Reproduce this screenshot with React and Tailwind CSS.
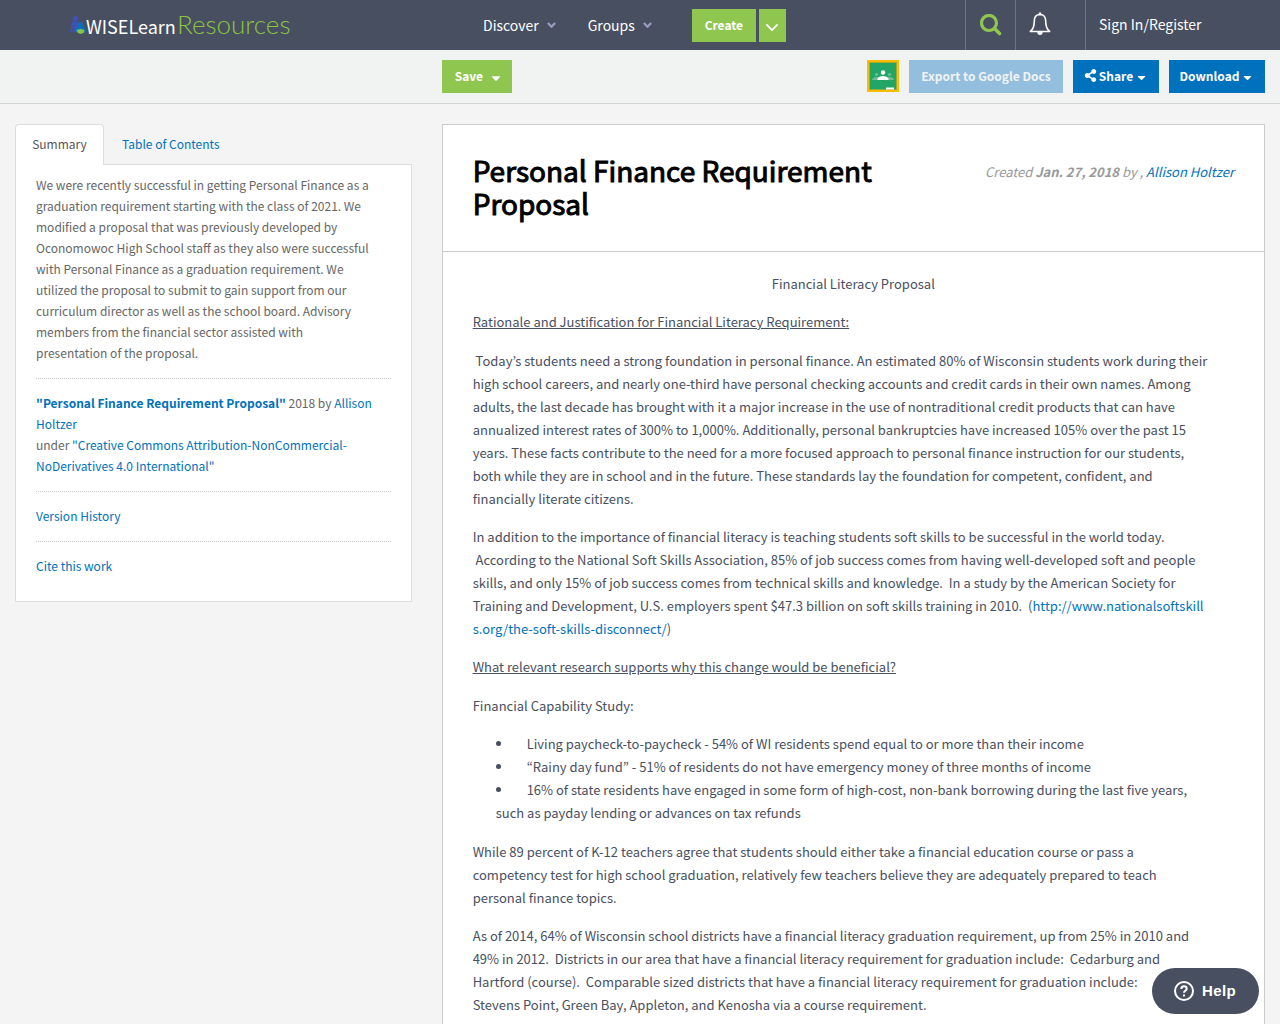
import { FaSearch, FaShareAlt, FaCaretDown } from "react-icons/fa";

const link = "text-[#0071bc] hover:underline";

function Chevron({ className, strokeWidth }) {
  return (
    <svg viewBox="0 0 16 10" className={className} fill="none" stroke="currentColor" strokeWidth={strokeWidth} aria-hidden="true">
      <path d="M1.5 1.5 8 8l6.500-6.500" />
    </svg>
  );
}

function Logo() {
  return (
    <a href="#home" className="ml-[69px] flex w-[224px] items-baseline self-center leading-[30px]">
      <svg viewBox="0 0 17 18" className="h-[18px] w-[17px] shrink-0" aria-hidden="true">
        <circle cx="6.500" cy="2.800" r="2.800" fill="#3f51b5" />
        <path d="M4.500 5c3.500-1 5.500 1 5.500 4l-2 7H.5C1.500 15 2 13.500 2 11c0-3 1-5.500 2.500-6z" fill="#3f51b5" />
        <path d="M4.500 9.500c0 2.500-.3 4.500-1.500 7" fill="none" stroke="#484f60" strokeWidth="0.800" />
        <circle cx="11.500" cy="8.500" r="2.500" fill="#0a72bd" />
        <path d="M7.500 11.500c2.500-1.200 5.500-1.200 8 0l1.500 5H6z" fill="#0a72bd" />
        <path d="M7.500 14l4-1 4 1-1 3-3 1-2.500-1z" fill="#8bc53f" />
      </svg>
      <span className="w-[91px] shrink-0 font-['Noto_Sans_CJK_KR',sans-serif] text-lg leading-[30px]">WISELearn</span>
      <span className="font-['Lato',sans-serif] text-[26px] leading-[30px] font-light text-[#8bc53f]">Resources</span>
    </a>
  );
}

function Bell() {
  return (
    <svg viewBox="0 0 22 24" className="h-6 w-[22px]" fill="none" stroke="#fff" strokeWidth="1.600" strokeLinejoin="round" aria-hidden="true">
      <path d="M11 2.500C7 2.500 5.300 5.500 5.300 9c0 5-.8 8-4 10.500h19.400C17.500 17 16.700 14 16.700 9c0-3.500-1.700-6.500-5.700-6.500z" />
      <path d="M11 .5v2" strokeWidth="2.400" />
      <path d="M8.300 20a2.700 3 0 0 0 5.400 0z" fill="#fff" stroke="none" />
    </svg>
  );
}

function Classroom() {
  return (
    <svg viewBox="0 0 32 32" className="size-8" aria-hidden="true">
      <path fill="#fbbc05" d="M0 0h32v32H0z" />
      <path fill="#23a566" d="M2.500 2.500h27v27h-27z" />
      <path d="M2.500 29.500v-27h27v27" fill="none" stroke="#b5a51c" strokeWidth=".8" />
      <g fill="#6dc096">
        <circle cx="9.500" cy="14.500" r="1.600" />
        <circle cx="22.500" cy="14.500" r="1.600" />
        <path d="M5 20c0-2 2.500-3 4.500-3s4.500 1 4.500 3zM18 20c0-2 2.500-3 4.500-3s4.500 1 4.500 3z" />
      </g>
      <circle cx="16" cy="12.500" r="2.200" fill="#fff" />
      <path fill="#fff" d="M10.500 20v-1c0-2 3.500-3 5.500-3s5.500 1 5.500 3v1zM19 27.500h8v2h-8z" />
    </svg>
  );
}

function NavMenu({ label }) {
  return (
    <button type="button" className="flex items-center gap-2 text-sm">
      {label}
      <Chevron className="h-[6px] w-[9px] text-[#9a9cc0]" strokeWidth="4" />
    </button>
  );
}

function Header() {
  return (
    <header className="flex h-[50px] items-stretch bg-[#484f60] text-white">
      <Logo />
      <nav className="ml-[190px] flex items-center gap-8">
        <NavMenu label="Discover" />
        <NavMenu label="Groups" />
        <div className="ml-2 flex gap-[3px]">
          <button type="button" className="h-[33px] w-16 bg-[#8fc650] text-xs font-bold">Create</button>
          <button type="button" aria-label="More create options" className="flex h-[33px] w-[27px] items-center justify-center bg-[#8fc650]">
            <Chevron className="mt-1 h-[9px] w-[14px]" strokeWidth="2" />
          </button>
        </div>
      </nav>
      <div className="ml-auto flex w-[315px] items-stretch">
        <button type="button" aria-label="Search" className="flex w-[50px] items-center justify-center border-l border-[#6f7488] text-[#8fc650]">
          <svg viewBox="0 0 22 22" className="size-[22px]" fill="none" stroke="currentColor" aria-hidden="true">
            <circle cx="9" cy="9" r="7.500" strokeWidth="3.200" />
            <path d="M14.500 14.500l5 5" strokeWidth="3.600" strokeLinecap="round" />
          </svg>
        </button>
        <button type="button" aria-label="Notifications" className="flex w-[70px] items-center border-l border-[#6f7488] pb-[2px] pl-[13px]">
          <Bell />
        </button>
        <a href="#signin" className="flex items-center border-l border-[#6f7488] pb-[2px] pl-[13px] text-sm">Sign In/Register</a>
      </div>
    </header>
  );
}

function Toolbar() {
  return (
    <div className="flex h-[54px] border-b border-[#d3d3d3] bg-[#f0f3f2] pt-[10px] text-xs font-bold text-white">
      <div className="w-1/3 shrink-0" />
      <div className="flex grow items-start px-[15px]">
        <button type="button" className="flex h-[33px] w-[70px] items-center gap-[6px] bg-[#8fc650] pb-[2px] pl-[13px]">
          Save <FaCaretDown className="mt-1 size-[14px]" />
        </button>
        <div className="ml-auto flex gap-[10px]">
          <button type="button" aria-label="Share to Google Classroom" className="size-8"><Classroom /></button>
          <button type="button" className="h-[33px] w-[154px] bg-[#93bedd] pb-[2px] text-[#f0f3f2]">Export to Google Docs</button>
          <button type="button" className="flex h-[33px] w-[86px] items-center justify-center gap-[2px] bg-[#0071bc] pb-[2px]">
            <FaShareAlt className="size-[13px]" />Share<FaCaretDown className="mt-1 size-[13px]" />
          </button>
          <button type="button" className="flex h-[33px] w-24 items-center justify-center gap-[2px] bg-[#0071bc] pb-[2px]">
            Download<FaCaretDown className="mt-1 size-[13px]" />
          </button>
        </div>
      </div>
    </div>
  );
}

function Sidebar() {
  return (
    <aside className="w-1/3 shrink-0 px-[15px] text-xs text-[#666]">
      <div role="tablist" className="flex items-start">
        <button type="button" role="tab" aria-selected="true" className="relative -mb-px h-[41px] w-[89px] rounded-t border border-b-0 border-[#ddd] bg-white pb-[2px] text-[#555]">Summary</button>
        <button type="button" role="tab" aria-selected="false" className="ml-[2px] h-10 px-4 text-[#0071bc]">Table of Contents</button>
      </div>
      <div role="tabpanel" className="border border-[#ddd] bg-white px-5 pt-[9px] pb-[25px] leading-[21px]">
        <p className="pr-[14px]">
          We were recently successful in getting Personal Finance as a graduation requirement starting with the class of 2021. We modified a proposal that was previously developed by Oconomowoc High School staff as they also were successful with Personal Finance as a graduation requirement. We utilized the proposal to submit to gain support from our curriculum director as well as the school board. Advisory members from the financial sector assisted with presentation of the proposal.
        </p>
        <div className="mt-[15px] border-t border-dotted border-[#ccc] pt-[13px] pr-[14px]">
          <a href="#work" className={`${link} font-bold`}>"Personal Finance Requirement Proposal"</a> 2018 by <a href="#author" className={link}>Allison Holtzer</a>
          <br />
          under <a href="#license" className={link}>"Creative Commons Attribution-NonCommercial-NoDerivatives 4.0 International"</a>
        </div>
        <div className="mt-[15px] border-t border-dotted border-[#ccc] pt-[13px]"><a href="#history" className={link}>Version History</a></div>
        <div className="mt-[15px] border-t border-dotted border-[#ccc] pt-[13px]"><a href="#cite" className={link}>Cite this work</a></div>
      </div>
    </aside>
  );
}

function Article() {
  return (
    <main className="min-w-0 grow px-[15px]">
      <article className="border border-[#ccc] bg-white">
        <div className="flex justify-between border-b border-[#ccc] px-[30px] pt-[29px] pb-[31px]">
          <h1 className="w-[420px] text-[28px] leading-[33px] font-normal text-black [-webkit-text-stroke:1px]">Personal Finance Requirement Proposal</h1>
          <p className="pt-[6px] text-[13px] leading-[23px] text-[#999] italic">
            Created <strong>Jan. 27, 2018</strong> by , <a href="#author" className={link}>Allison Holtzer</a>
          </p>
        </div>
        <div className="pt-5 pb-10 pl-[30px] text-[13px] leading-[23px]">
          <p className="mb-[15px] pr-[30px] text-center">Financial Literacy Proposal</p>
          <div className="pr-[54px]">
            <p className="mb-4 underline">Rationale and Justification for Financial Literacy Requirement:</p>
            <p className="mb-[15px]">
              &nbsp;Today’s students need a strong foundation in personal finance. An estimated 80% of Wisconsin students work during their high school careers, and nearly one-third have personal checking accounts and credit cards in their own names. Among adults, the last decade has brought with it a major increase in the use of nontraditional credit products that can have annualized interest rates of 300% to 1,000%. Additionally, personal bankruptcies have increased 105% over the past 15 years. These facts contribute to the need for a more focused approach to personal finance instruction for our students, both while they are in school and in the future. These standards lay the foundation for competent, confident, and financially literate citizens.
            </p>
            <p className="mb-[15px]">
              In addition to the importance of financial literacy is teaching students soft skills to be successful in the world today. &nbsp;According to the National Soft Skills Association, 85% of job success comes from having well-developed soft and people skills, and only 15% of job success comes from technical skills and knowledge.&nbsp; In a study by the American Society for Training and Development, U.S. employers spent $47.3 billion on soft skills training in 2010.&nbsp; (<a href="#soft-skills" className={`${link} break-all`}>http://www.nationalsoftskills.org/the-soft-skills-disconnect/</a>)
            </p>
            <p className="mb-4 underline">What relevant research supports why this change would be beneficial?</p>
            <p className="mb-[15px]">Financial Capability Study:</p>
            <ul className="mb-4 list-inside list-disc pl-[23px]">
              <li><span className="pl-3">Living paycheck-to-paycheck - 54% of WI residents spend equal to or more than their income</span></li>
              <li><span className="pl-3">“Rainy day fund” - 51% of residents do not have emergency money of three months of income</span></li>
              <li><span className="pl-3">16% of state residents have engaged in some form of high-cost, non-bank borrowing during the last five years, such as payday lending or advances on tax refunds</span></li>
            </ul>
            <p className="mb-[15px]">
              While 89 percent of K-12 teachers agree that students should either take a financial education course or pass a competency test for high school graduation, relatively few teachers believe they are adequately prepared to teach personal finance topics.
            </p>
            <p>
              As of 2014, 64% of Wisconsin school districts have a financial literacy graduation requirement, up from 25% in 2010 and 49% in 2012.&nbsp; Districts in our area that have a financial literacy requirement for graduation include:&nbsp; Cedarburg and Hartford (course).&nbsp; Comparable sized districts that have a financial literacy requirement for graduation include:<br />
              Stevens Point, Green Bay, Appleton, and Kenosha via a course requirement.
            </p>
          </div>
        </div>
      </article>
    </main>
  );
}

export default function App() {
  return (
    <div className="h-screen overflow-hidden bg-[#f4f4f4] font-['Noto_Sans_CJK_KR',sans-serif] text-[#484f60]">
      <Header />
      <Toolbar />
      <div className="flex items-start pt-5">
        <Sidebar />
        <Article />
      </div>
      <button type="button" className="fixed right-[21px] bottom-[10px] flex h-[46px] w-[107px] items-center gap-2 rounded-full bg-[#484f60] pl-[22px] font-['Liberation_Sans',sans-serif] text-[15px] font-bold tracking-wide text-white">
        <svg viewBox="0 0 20 20" className="size-5 shrink-0" fill="none" stroke="#fff" strokeWidth="2" aria-hidden="true">
          <circle cx="10" cy="10" r="9" />
          <path d="M7.300 8c0-3.600 5.400-3.400 5.400-.2 0 2-2.700 2-2.700 4" />
          <path d="M10 13.500v2" />
        </svg>
        Help
      </button>
    </div>
  );
}
